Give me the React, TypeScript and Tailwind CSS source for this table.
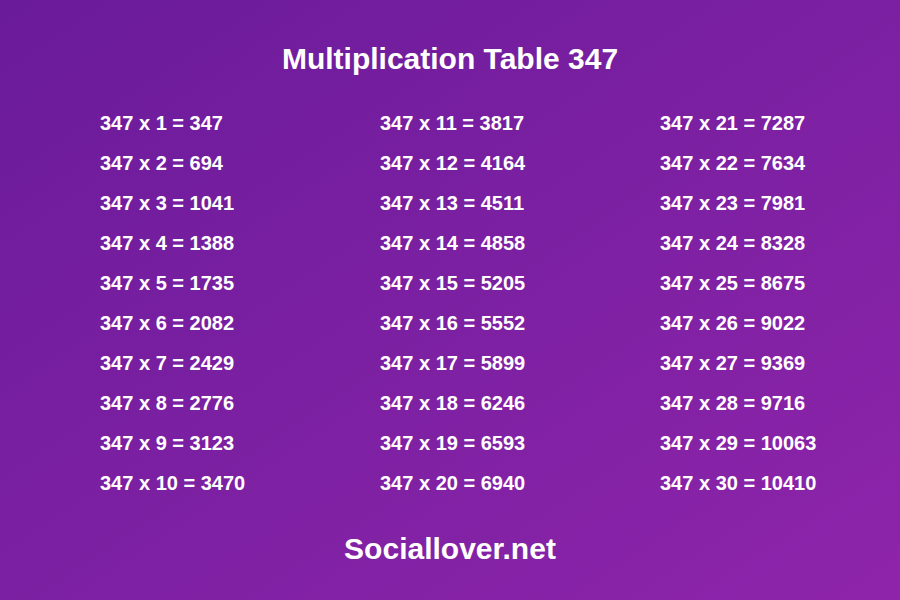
const base = 347

export default function App() {
  const columns = [0, 1, 2].map((c) =>
    Array.from({ length: 10 }, (_, i) => c * 10 + i + 1)
  )

  return (
    <div
      className="w-[900px] h-[600px] bg-gradient-to-br from-[#6a1b9a] to-[#8e24aa] text-white flex flex-col"
      style={{ fontFamily: '"Liberation Sans", Arial, sans-serif' }}
    >
      {/* Title */}
      <h1 className="mt-[41px] h-[36px] leading-[36px] text-[30px] font-bold text-center">
        Multiplication Table {base}
      </h1>

      {/* Table */}
      <div className="mt-[26px] pl-[100px] grid grid-cols-[280px_280px_1fr]">
        {columns.map((col, ci) => (
          <div key={ci} className="flex flex-col">
            {col.map((n) => (
              <div key={n} className="h-[40px] leading-[40px] text-[20px] font-bold whitespace-nowrap">
                {base} x {n} = {base * n}
              </div>
            ))}
          </div>
        ))}
      </div>

      {/* Footer */}
      <div className="mt-[28px] h-[36px] leading-[36px] text-[30px] font-bold text-center">
        Sociallover.net
      </div>
    </div>
  )
}
